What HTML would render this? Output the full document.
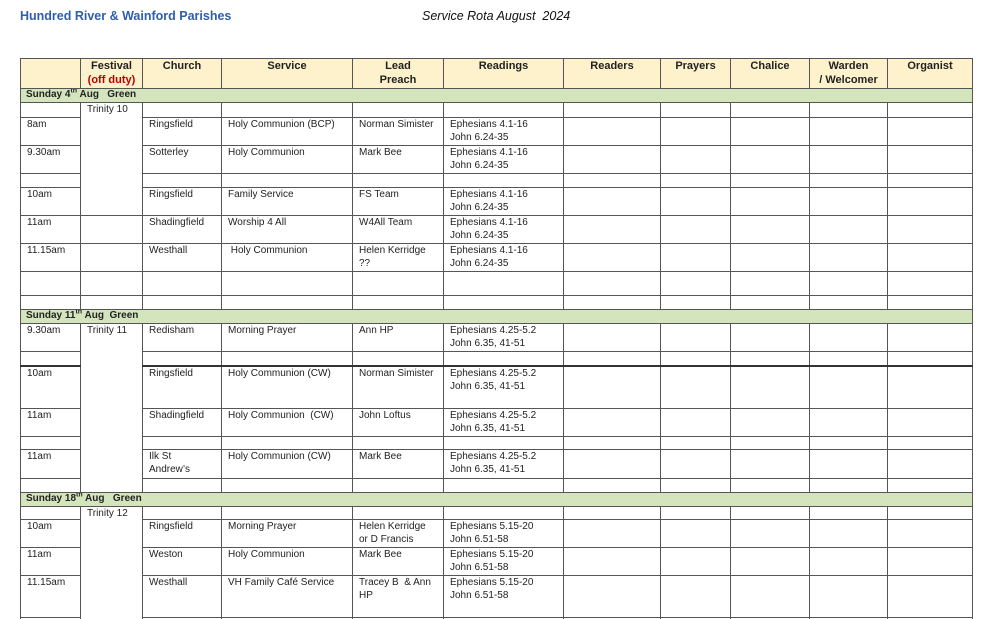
<!DOCTYPE html>
<html><head><meta charset="utf-8">
<style>
html,body{margin:0;padding:0;background:#fff;width:985px;height:619px;overflow:hidden;}
body{position:relative;font-family:"Liberation Sans",Arial,sans-serif;color:#222;}
.t1{position:absolute;left:20px;top:9px;font-size:12.5px;font-weight:bold;color:#2e5fa8;}
.t2{position:absolute;left:422px;top:9px;font-size:12.5px;font-style:italic;color:#111;}
table{position:absolute;left:20px;top:58px;border-collapse:collapse;table-layout:fixed;width:953px;font-size:10px;}
td{border:1px solid #555;padding:0 0 0 6px;vertical-align:top;line-height:13px;overflow:hidden;white-space:nowrap;}
td div{position:relative;top:1px;}
tr.h td{background:#fdf2cc;font-weight:bold;text-align:center;font-size:11px;padding:0;line-height:14px;}
tr.g td{background:#d4e5bd;font-weight:bold;font-size:10px;line-height:12px;padding:0 0 0 5px;}
.red{color:#c00000;}
sup{font-size:7px;line-height:0;}
tr.thick td{border-top:2px solid #333;}
</style></head><body>
<div class="t1">Hundred River &amp; Wainford Parishes</div>
<div class="t2">Service Rota August&nbsp; 2024</div>
<table>
<colgroup><col style="width:60px"><col style="width:62px"><col style="width:79px"><col style="width:131px"><col style="width:91px"><col style="width:120px"><col style="width:97px"><col style="width:70px"><col style="width:79px"><col style="width:78px"><col style="width:85px"></colgroup>
<tr class="h" style="height:30px"><td></td><td>Festival<br><span class="red">(off duty)</span></td><td>Church</td><td>Service</td><td>Lead<br>Preach</td><td>Readings</td><td>Readers</td><td>Prayers</td><td>Chalice</td><td>Warden<br>/ Welcomer</td><td>Organist</td></tr>
<tr class="g" style="height:14px"><td colspan="11">Sunday 4<sup>th</sup> Aug&nbsp;&nbsp; Green</td></tr>
<tr style="height:15px"><td></td><td rowspan="5">Trinity 10</td><td></td><td></td><td></td><td></td><td></td><td></td><td></td><td></td><td></td></tr>
<tr style="height:28px"><td>8am</td><td>Ringsfield</td><td>Holy Communion (BCP)</td><td>Norman Simister</td><td>Ephesians 4.1-16<br>John 6.24-35</td><td></td><td></td><td></td><td></td><td></td></tr>
<tr style="height:28px"><td>9.30am</td><td>Sotterley</td><td>Holy Communion</td><td>Mark Bee</td><td>Ephesians 4.1-16<br>John 6.24-35</td><td></td><td></td><td></td><td></td><td></td></tr>
<tr style="height:14px"><td></td><td></td><td></td><td></td><td></td><td></td><td></td><td></td><td></td><td></td></tr>
<tr style="height:28px"><td>10am</td><td>Ringsfield</td><td>Family Service</td><td>FS Team</td><td>Ephesians 4.1-16<br>John 6.24-35</td><td></td><td></td><td></td><td></td><td></td></tr>
<tr style="height:28px"><td>11am</td><td></td><td>Shadingfield</td><td>Worship 4 All</td><td>W4All Team</td><td>Ephesians 4.1-16<br>John 6.24-35</td><td></td><td></td><td></td><td></td><td></td></tr>
<tr style="height:28px"><td>11.15am</td><td></td><td>Westhall</td><td>&nbsp;Holy Communion</td><td>Helen Kerridge<br>??</td><td>Ephesians 4.1-16<br>John 6.24-35</td><td></td><td></td><td></td><td></td><td></td></tr>
<tr style="height:24px"><td></td><td></td><td></td><td></td><td></td><td></td><td></td><td></td><td></td><td></td><td></td></tr>
<tr style="height:14px"><td></td><td></td><td></td><td></td><td></td><td></td><td></td><td></td><td></td><td></td><td></td></tr>
<tr class="g" style="height:14px"><td colspan="11">Sunday 11<sup>th</sup> Aug&nbsp; Green</td></tr>
<tr style="height:28px"><td>9.30am</td><td rowspan="7">Trinity 11</td><td>Redisham</td><td>Morning Prayer</td><td>Ann HP</td><td>Ephesians 4.25-5.2<br>John 6.35, 41-51</td><td></td><td></td><td></td><td></td><td></td></tr>
<tr style="height:14px"><td></td><td></td><td></td><td></td><td></td><td></td><td></td><td></td><td></td><td></td></tr>
<tr class="thick" style="height:43px"><td>10am</td><td>Ringsfield</td><td>Holy Communion (CW)</td><td>Norman Simister</td><td>Ephesians 4.25-5.2<br>John 6.35, 41-51</td><td></td><td></td><td></td><td></td><td></td></tr>
<tr style="height:28px"><td>11am</td><td>Shadingfield</td><td>Holy Communion&nbsp; (CW)</td><td>John Loftus</td><td>Ephesians 4.25-5.2<br>John 6.35, 41-51</td><td></td><td></td><td></td><td></td><td></td></tr>
<tr style="height:13px"><td></td><td></td><td></td><td></td><td></td><td></td><td></td><td></td><td></td><td></td></tr>
<tr style="height:29px"><td>11am</td><td>Ilk St<br>Andrew’s</td><td>Holy Communion (CW)</td><td>Mark Bee</td><td>Ephesians 4.25-5.2<br>John 6.35, 41-51</td><td></td><td></td><td></td><td></td><td></td></tr>
<tr style="height:14px"><td></td><td></td><td></td><td></td><td></td><td></td><td></td><td></td><td></td><td></td></tr>
<tr class="g" style="height:14px"><td colspan="11">Sunday 18<sup>th</sup> Aug&nbsp;&nbsp; Green</td></tr>
<tr style="height:13px"><td></td><td rowspan="5">Trinity 12</td><td></td><td></td><td></td><td></td><td></td><td></td><td></td><td></td><td></td></tr>
<tr style="height:28px"><td>10am</td><td>Ringsfield</td><td>Morning Prayer</td><td>Helen Kerridge<br>or D Francis</td><td>Ephesians 5.15-20<br>John 6.51-58</td><td></td><td></td><td></td><td></td><td></td></tr>
<tr style="height:28px"><td>11am</td><td>Weston</td><td>Holy Communion</td><td>Mark Bee</td><td>Ephesians 5.15-20<br>John 6.51-58</td><td></td><td></td><td></td><td></td><td></td></tr>
<tr style="height:42px"><td>11.15am</td><td>Westhall</td><td>VH Family Café Service</td><td>Tracey B&nbsp; &amp; Ann<br>HP</td><td>Ephesians 5.15-20<br>John 6.51-58</td><td></td><td></td><td></td><td></td><td></td></tr>
<tr style="height:20px"><td></td><td></td><td></td><td></td><td></td><td></td><td></td><td></td><td></td><td></td></tr>
</table>
</body></html>
